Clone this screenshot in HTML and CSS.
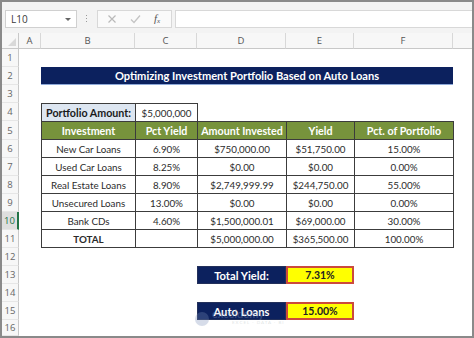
FILE: index.html
```html
<!DOCTYPE html>
<html>
<head>
<meta charset="utf-8">
<link rel="stylesheet" href="styles.css">
</head>
<body>
<div class="frame">
  <div class="fbar">
    <div class="namebox"><span>L10</span><span class="caret"></span></div>
    <div class="dots"><i></i><i></i><i></i></div>
    <div class="btns">
      <svg class="ic" width="10" height="10" viewBox="0 0 10 10"><path d="M1.5 1.5 L8.5 8.5 M8.5 1.5 L1.5 8.5" stroke="#b9b9b9" stroke-width="1.2" fill="none"/></svg>
      <svg class="ic" width="11" height="10" viewBox="0 0 11 10"><path d="M1 5.5 L4 8.5 L10 1.5" stroke="#c4c4c4" stroke-width="1.3" fill="none"/></svg>
      <span class="fx">f<sub>x</sub></span>
    </div>
    <div class="finput"></div>
  </div>
  <div class="sheet">
    <div class="corner"><span class="tri"></span></div>
    <div class="ch">A</div><div class="ch">B</div><div class="ch">C</div><div class="ch">D</div><div class="ch">E</div><div class="ch">F</div><div class="ch last"></div>

    <div class="rh">1</div><div class="rh">2</div><div class="rh">3</div><div class="rh">4</div>
    <div class="rh">5</div><div class="rh">6</div><div class="rh">7</div><div class="rh">8</div>
    <div class="rh">9</div><div class="rh sel">10</div><div class="rh">11</div><div class="rh">12</div>
    <div class="rh">13</div><div class="rh">14</div><div class="rh">15</div><div class="rh">16</div>

    <div class="title">Optimizing Investment Portfolio Based on Auto Loans</div>

    <table class="tbl">
      <colgroup><col class="cb"><col class="cc"><col class="cd"><col class="ce"><col class="cf"></colgroup>
      <tr>
        <td class="lab">Portfolio Amount:</td><td>$5,000,000</td><td class="blank" colspan="3"></td>
      </tr>
      <tr class="hd">
        <td>Investment</td><td>Pct Yield</td><td>Amount Invested</td><td>Yield</td><td>Pct. of Portfolio</td>
      </tr>
      <tr><td>New Car Loans</td><td>6.90%</td><td>$750,000.00</td><td>$51,750.00</td><td>15.00%</td></tr>
      <tr><td>Used Car Loans</td><td>8.25%</td><td>$0.00</td><td>$0.00</td><td>0.00%</td></tr>
      <tr><td>Real Estate Loans</td><td>8.90%</td><td>$2,749,999.99</td><td>$244,750.00</td><td>55.00%</td></tr>
      <tr><td>Unsecured Loans</td><td>13.00%</td><td>$0.00</td><td>$0.00</td><td>0.00%</td></tr>
      <tr><td>Bank CDs</td><td>4.60%</td><td>$1,500,000.01</td><td>$69,000.00</td><td>30.00%</td></tr>
      <tr><td class="b">TOTAL</td><td></td><td>$5,000,000.00</td><td>$365,500.00</td><td>100.00%</td></tr>
    </table>

    <div class="navy r13">Total Yield:</div>
    <div class="yel r13">7.31%</div>
    <div class="navy r15">Auto Loans</div>
    <div class="yel r15">15.00%</div>
  </div>
  <div class="wm"><span class="wm-logo"></span><span class="wm-t">exceldemy<small>EXCEL · DATA · BI</small></span></div>
</div>
</body>
</html>
```
FILE: styles.css
```css
html, body { margin: 0; padding: 0; background: #fff; }
.frame {
  width: 474px; height: 338px; box-sizing: border-box;
  border: 2px solid #8a8a8a; background: #fff;
  position: relative; overflow: hidden;
  font-family: "Open Sans", "Noto Sans", sans-serif;
}
.fbar {
  height: 31px; box-sizing: border-box; background: #f3f3f3;
  display: flex; align-items: flex-start; padding: 8px 0 0 3px;
}
.namebox {
  width: 72px; height: 18px; box-sizing: border-box;
  border: 1px solid #d0d0d0; background: #fff;
  display: flex; align-items: center; justify-content: space-between;
  padding: 0 5px 0 5px; font-size: 10px; color: #3a3a3a;
}
.caret {
  width: 0; height: 0; border-left: 3px solid transparent; border-right: 3px solid transparent;
  border-top: 3px solid #666;
}
.dots {
  width: 2px; margin: 5px 9px 0 9px; display: flex; flex-direction: column; gap: 2px;
}
.dots i { display: block; width: 1px; height: 1px; background: #9a9a9a; }
.btns {
  width: 75px; height: 18px; box-sizing: border-box; border: 1px solid #d8d8d8;
  background: #fafafa; display: flex; align-items: center; padding-left: 9px; gap: 13px;
}
.fx { font-family: "Liberation Serif", serif; font-style: italic; font-size: 11px; color: #555; line-height: 1; }
.fx sub { font-size: 7px; vertical-align: -1px; }
.finput {
  flex: 1; height: 18px; margin-left: 3px; box-sizing: border-box;
  border: 1px solid #d8d8d8; border-right: none; background: #fff;
}
.sheet {
  display: grid;
  grid-template-columns: 17px 22px 94px 62px 89px 68px 99px 1fr;
  grid-template-rows: 16px 18px 18px 18px 18px 19px 18px 18px 18px 18px 18px 18px 18px 18px 18px 18px 16px;
  font-family: "Lato", "Liberation Sans", sans-serif;
}
.corner { grid-column: 1; grid-row: 1; border-right: 1px solid #c8c8c8; border-bottom: 1px solid #c8c8c8; position: relative; background: #f7f7f7; }
.tri { position: absolute; right: 2px; bottom: 2px; width: 0; height: 0; border-left: 8px solid transparent; border-bottom: 8px solid #d9d9d9; }
.ch {
  grid-row: 1; border-right: 1px solid #d8d8d8; border-bottom: 1px solid #c8c8c8;
  background: #f7f7f7; font-family: "Open Sans", sans-serif; font-size: 9.5px; color: #555;
  display: flex; align-items: center; justify-content: center; box-sizing: border-box;
}
.ch.last { border-right: none; }
.rh {
  grid-column: 1; border-right: 1px solid #c8c8c8; border-bottom: 1px solid #e6e6e6;
  background: #f7f7f7; font-family: "Open Sans", sans-serif; font-size: 9.5px; color: #666;
  display: flex; align-items: center; justify-content: center; box-sizing: border-box;
}
.rh.sel { background: #dedede; border-right: 2px solid #217346; color: #217346; }
.title {
  grid-row: 3; grid-column: 3 / 8; background: #0c215e; color: #fff;
  font-weight: 700; font-size: 11.1px; display: flex; align-items: center; justify-content: center;
  border-bottom: 1px solid #8ea9d8; box-sizing: border-box;
}
.tbl {
  grid-row: 5 / 13; grid-column: 3 / 8; align-self: start;
  border-collapse: collapse; table-layout: fixed; width: 412px;
  font-size: 9.8px; color: #2b2b2b;
}
.cb { width: 94px; } .cc { width: 62px; } .cd { width: 89px; } .ce { width: 68px; } .cf { width: 99px; }
.tbl tr { height: 18px; }
.tbl td { border: 1px solid #3c3c3c; padding: 0; text-align: center; white-space: nowrap; }
.tbl td.blank { border: none; }
.tbl td.lab { background: #dde6f1; font-weight: 700; color: #1a1a1a; font-size: 10.7px; }
.tbl tr.hd td { background: #77933c; color: #fff; font-weight: 700; font-size: 10.7px; }
.tbl td.b { font-weight: 700; }
.navy {
  grid-column: 5; background: #0c215e; color: #fff; font-weight: 700; font-size: 11.2px;
  display: flex; align-items: center; justify-content: center; border: 1px solid #23305a; box-sizing: border-box;
}
.yel {
  grid-column: 6; background: #ffff00; color: #222; font-weight: 700; font-size: 10.5px;
  display: flex; align-items: center; justify-content: center; border: 2px solid #cc4a3c; box-sizing: border-box;
}
.r13 { grid-row: 14; }
.r15 { grid-row: 16; }
.wm {
  position: absolute; left: 193px; top: 306px; display: flex; align-items: flex-end; gap: 3px; opacity: 0.3;
}
.wm-logo { width: 14px; height: 14px; border-radius: 50%; background: #7b8fb8; }
.wm-t { display: flex; flex-direction: column; font-family: "Lato", sans-serif; font-size: 11px; font-weight: 700; color: #8ea1c6; line-height: 1; }
.wm-t small { font-size: 4.5px; letter-spacing: 1px; color: #9aa; font-weight: 400; margin-left: 20px; margin-top: 2px; }
```
